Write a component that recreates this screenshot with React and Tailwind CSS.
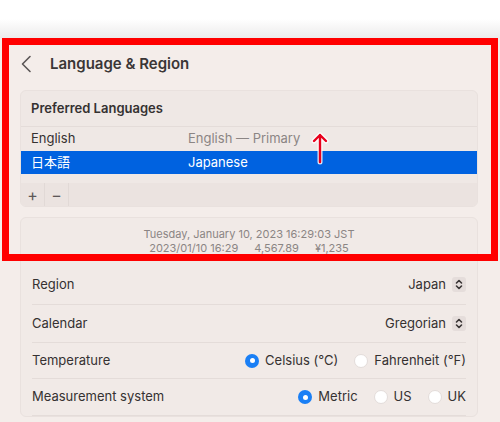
const FONT = { fontFamily: 'Inter, "Noto Sans CJK JP", "Liberation Sans", sans-serif' };

function Stepper() {
  return (
    <span className="ml-[6px] flex h-[15px] w-[14px] items-center justify-center rounded-[3px] bg-[#e5dddb]">
      <svg width="8" height="11" viewBox="0 0 8 11" fill="none" stroke="#3a3535" strokeWidth="1.6" strokeLinecap="round" strokeLinejoin="round">
        <path d="M1.5 4 L4 1.5 L6.5 4" />
        <path d="M1.5 7 L4 9.5 L6.5 7" />
      </svg>
    </span>
  );
}

function Radio({ checked, label }) {
  return (
    <span className="flex items-center">
      {checked ? (
        <span className="flex h-[14px] w-[14px] items-center justify-center rounded-full bg-[#1a7ff5]">
          <span className="h-[5px] w-[5px] rounded-full bg-white" />
        </span>
      ) : (
        <span className="h-[14px] w-[14px] rounded-full border border-[#e3dcda] bg-white" />
      )}
      <span className="ml-[6px]">{label}</span>
    </span>
  );
}

const ROWS = [
  { key: 'region', label: 'Region', h: 'h-[40px]' },
  { key: 'calendar', label: 'Calendar', h: 'h-[38px]' },
  { key: 'temp', label: 'Temperature', h: 'h-[36px]' },
  { key: 'measure', label: 'Measurement system', h: 'h-[37px]' }
];

function RowValue({ rowKey }) {
  if (rowKey === 'region') return <span className="flex items-center">Japan<Stepper /></span>;
  if (rowKey === 'calendar') return <span className="flex items-center">Gregorian<Stepper /></span>;
  if (rowKey === 'temp') {
    return (
      <span className="flex items-center gap-[16px]">
        <Radio checked label="Celsius (°C)" />
        <Radio label="Fahrenheit (°F)" />
      </span>
    );
  }
  return (
    <span className="flex items-center gap-[16px]">
      <Radio checked label="Metric" />
      <Radio label="US" />
      <Radio label="UK" />
    </span>
  );
}

export default function App() {
  return (
    <div className="relative h-[422px] w-[500px] overflow-hidden bg-[#f4edea] text-[#353131]" style={FONT}>
      {/* white area above the window */}
      <div className="h-[38px] bg-gradient-to-b from-white via-white to-[#ecebeb]" />

      {/* title bar */}
      <div className="flex h-[52px] items-center">
        <svg className="ml-[20px]" width="12" height="18" viewBox="0 0 12 18" fill="none" stroke="#5b5656" strokeWidth="1.6" strokeLinecap="round" strokeLinejoin="round">
          <path d="M10 1.5 L2.5 9 L10 16.5" />
        </svg>
        <span className="ml-[18px] text-[15px] font-semibold text-[#3a3636]">Language &amp; Region</span>
      </div>

      {/* preferred languages */}
      <div className="ml-[20px] w-[458px] overflow-hidden rounded-[6px] border border-[#e9e1de] bg-[#efe8e5]">
        <div className="flex h-[36px] items-center border-b border-[#e4dcd9] px-[10px] text-[13px] font-semibold">
          Preferred Languages
        </div>
        <div className="flex h-[24px] items-center text-[13px]">
          <span className="w-[167px] pl-[10px]">English</span>
          <span className="text-[#8b8584]">English — Primary</span>
        </div>
        <div className="flex h-[23px] items-center bg-[#0062e0] text-[13px] text-white">
          <span className="w-[167px] pl-[10px]">日本語</span>
          <span>Japanese</span>
        </div>
        <div className="h-[9px]" />
        <div className="flex h-[23px] items-center bg-[#ebe3e0] text-[16px] text-[#5e5858]">
          <span className="flex h-full w-[24px] items-center justify-center border-r border-[#e1d9d6]">+</span>
          <span className="flex h-full w-[24px] items-center justify-center border-r border-[#e1d9d6]">−</span>
        </div>
      </div>

      {/* region settings */}
      <div className="ml-[20px] mt-[10px] w-[458px] rounded-[6px] border border-[#e9e1de] bg-[#f1eae7]">
        <div className="flex h-[47px] flex-col items-center pt-[9px] text-[11px] leading-[14px] text-[#8b8584]">
          <span>Tuesday, January 10, 2023 16:29:03 JST</span>
          <span className="flex gap-[16px]">
            <span>2023/01/10 16:29</span>
            <span>4,567.89</span>
            <span>¥1,235</span>
          </span>
        </div>
        <div className="mx-[11px]">
          {ROWS.map(row => (
            <div key={row.key} className={`flex ${row.h} items-center justify-between border-b border-[#e4dcd9] text-[13px]`}>
              <span>{row.label}</span>
              <RowValue rowKey={row.key} />
            </div>
          ))}
        </div>
      </div>

      {/* annotation: red frame */}
      <div className="absolute left-[2px] top-[38px] h-[223px] w-[496px] border-[7px] border-[#ff0000]" />

      {/* annotation: arrow */}
      <svg className="absolute left-[311px] top-[131px]" width="18" height="35" viewBox="0 0 18 35" fill="none" strokeLinecap="round" strokeLinejoin="round">
        <path d="M9 4 L9 31 M3 10 L9 4 L15 10" stroke="#ffffff" strokeWidth="5" opacity="0.85" />
        <path d="M9 4 L9 31 M3 10 L9 4 L15 10" stroke="#e8001c" strokeWidth="2.4" />
      </svg>
    </div>
  );
}
